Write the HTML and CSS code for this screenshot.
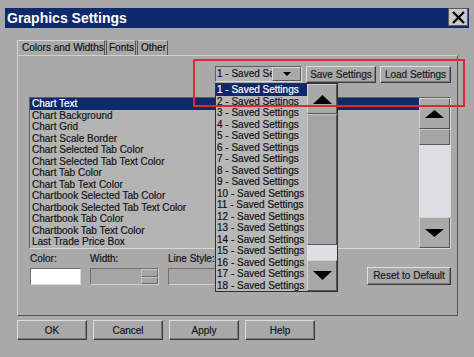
FILE: index.html
```html
<!DOCTYPE html>
<html>
<head>
<meta charset="utf-8">
<link rel="stylesheet" href="styles.css">
</head>
<body>
<div class="window">
  <div class="titlebar">
    <span class="title">Graphics Settings</span>
    <span class="close"><svg width="13" height="13" viewBox="0 0 13 13"><path d="M1 1 L12 12 M12 1 L1 12" stroke="#000" stroke-width="2.2"/></svg></span>
  </div>
  <div class="content">
    <div class="tabs">
      <div class="tab active">Colors and Widths</div>
      <div class="tab">Fonts</div>
      <div class="tab">Other</div>
    </div>
    <div class="panel">
      <div class="toprow">
        <div class="combo">
          <div class="combo-text">1 - Saved Se</div>
          <div class="combo-btn"><svg width="8" height="4" viewBox="0 0 8 4"><polygon points="0,0 8,0 4,4" fill="#000"/></svg></div>
          <div class="dropdown">
            <ul class="dd-items">
              <li class="sel">1 - Saved Settings</li>
              <li>2 - Saved Settings</li>
              <li>3 - Saved Settings</li>
              <li>4 - Saved Settings</li>
              <li>5 - Saved Settings</li>
              <li>6 - Saved Settings</li>
              <li>7 - Saved Settings</li>
              <li>8 - Saved Settings</li>
              <li>9 - Saved Settings</li>
              <li>10 - Saved Settings</li>
              <li>11 - Saved Settings</li>
              <li>12 - Saved Settings</li>
              <li>13 - Saved Settings</li>
              <li>14 - Saved Settings</li>
              <li>15 - Saved Settings</li>
              <li>16 - Saved Settings</li>
              <li>17 - Saved Settings</li>
              <li>18 - Saved Settings</li>
            </ul>
            <div class="scroll dd-scroll">
              <div class="sbtn"><svg width="19" height="9" viewBox="0 0 19 9"><polygon points="0,9 9.5,0 19,9" fill="#000"/></svg></div>
              <div class="thumb dd-thumb"></div>
              <div class="track dd-track"></div>
              <div class="sbtn down"><svg width="19" height="9" viewBox="0 0 19 9"><polygon points="0,0 19,0 9.5,9" fill="#000"/></svg></div>
            </div>
          </div>
        </div>
        <button class="btn save">Save Settings</button>
        <button class="btn load">Load Settings</button>
      </div>
      <div class="listbox">
        <ul class="items">
          <li class="sel">Chart Text</li>
          <li>Chart Background</li>
          <li>Chart Grid</li>
          <li>Chart Scale Border</li>
          <li>Chart Selected Tab Color</li>
          <li>Chart Selected Tab Text Color</li>
          <li>Chart Tab Color</li>
          <li>Chart Tab Text Color</li>
          <li>Chartbook Selected Tab Color</li>
          <li>Chartbook Selected Tab Text Color</li>
          <li>Chartbook Tab Color</li>
          <li>Chartbook Tab Text Color</li>
          <li>Last Trade Price Box</li>
        </ul>
        <div class="scroll list-scroll">
          <div class="sbtn big"><svg width="19" height="8" viewBox="0 0 19 8"><polygon points="0,8 9.5,0 19,8" fill="#000"/></svg></div>
          <div class="thumb list-thumb"></div>
          <div class="track list-track"></div>
          <div class="sbtn big down"><svg width="19" height="8" viewBox="0 0 19 8"><polygon points="0,0 19,0 9.5,8" fill="#000"/></svg></div>
        </div>
      </div>
      <div class="fields">
        <div class="field">
          <span class="label">Color:</span>
          <div class="swatch"></div>
        </div>
        <div class="field">
          <span class="label">Width:</span>
          <div class="spin">
            <div class="spin-input"></div>
            <div class="spin-btns"><span></span><span></span></div>
          </div>
        </div>
        <div class="field">
          <span class="label">Line Style:</span>
          <div class="linebox"></div>
        </div>
        <button class="btn reset">Reset to Default</button>
      </div>
    </div>
    <div class="actions">
      <button class="btn act">OK</button>
      <button class="btn act">Cancel</button>
      <button class="btn act">Apply</button>
      <button class="btn act">Help</button>
    </div>
  </div>
  <div class="highlight"></div>
</div>
</body>
</html>
```
FILE: styles.css
```css
* { box-sizing: border-box; }
html, body {
  margin: 0;
  padding: 0;
  background: #a9a9aa;
  font-family: "Liberation Sans", Arial, sans-serif;
  font-size: 10px;
  color: #141414;
}
.window {
  position: relative;
  width: 474px;
  height: 357px;
  padding: 8px 5px 0 5px;
  -webkit-text-stroke: 0.2px currentColor;
}
.titlebar {
  height: 20px;
  background: #0f2a6c;
  display: flex;
  align-items: flex-start;
  justify-content: space-between;
}
.title {
  color: #fff;
  font-weight: bold;
  font-size: 14px;
  line-height: 20px;
  padding-left: 2px;
  -webkit-text-stroke: 0;
}
.close {
  width: 20px;
  height: 18px;
  background: #c9c9cb;
  border: 1px solid #5a5a5a;
  display: flex;
  align-items: center;
  justify-content: center;
  margin-right: 1px;
}
.content {
  padding: 12px 11px 0 12px;
}
.tabs {
  display: flex;
  height: 15px;
}
.tab {
  height: 15px;
  line-height: 13px;
  white-space: nowrap;
  border-left: 1px solid #555;
  border-right: 1px solid #555;
  border-top: 1px solid #c8c8c8;
  margin-right: 1px;
}
.tab.active {
  width: 88px;
  padding-left: 4px;
  border-left: 1px solid #d5d5d5;
  border-top: 1px solid #d5d5d5;
}
.tab:nth-child(2) { width: 30px; padding-left: 2px; }
.tab:nth-child(3) { width: 31px; padding-left: 3px; }
.panel {
  width: 441px;
  height: 261px;
  border: 1px solid;
  border-color: #cfcfcf #505050 #505050 #cfcfcf;
  padding: 10px 0 0 0;
}
.toprow {
  display: flex;
  justify-content: flex-end;
  align-items: flex-start;
  gap: 4px;
  padding-right: 6px;
  height: 17px;
}
.combo {
  position: relative;
  width: 87px;
  height: 16px;
  display: flex;
  border: 1px solid;
  border-color: #5e5e5e #dadada #dadada #5e5e5e;
  background: #b4b4b4;
  z-index: 2;
}
.combo-text {
  width: 56px;
  overflow: hidden;
  white-space: nowrap;
  line-height: 14px;
  padding-left: 1px;
}
.combo-btn {
  flex: 1;
  border: 1px solid;
  border-color: #dadada #5a5a5a #5a5a5a #dadada;
  background: #a9a9aa;
  display: flex;
  align-items: center;
  justify-content: center;
}
.dropdown {
  position: absolute;
  left: -1px;
  top: 16px;
  width: 123px;
  height: 209px;
  border: 1px solid #303030;
  background: #b8b8b8;
  display: flex;
}
.dd-items, .items {
  list-style: none;
  margin: 0;
  padding: 0;
}
.dd-items {
  width: 91px;
}
.dd-items li {
  height: 11.5px;
  line-height: 11.5px;
  padding-left: 1px;
  white-space: nowrap;
}
.sel {
  background: #0f2a6c;
  color: #fff;
}
.scroll {
  display: flex;
  flex-direction: column;
}
.dd-scroll { width: 30px; }
.list-scroll { width: 31px; }
.sbtn {
  height: 30px;
  border: 1px solid;
  border-color: #d2d2d2 #555 #555 #d2d2d2;
  background: #a9a9aa;
  display: flex;
  align-items: center;
  justify-content: center;
}
.sbtn.big { height: 31px; }
.sbtn.down { height: 31px; }
.thumb {
  border: 1px solid;
  border-color: #c8c8c8 #5a5a5a #5a5a5a #c8c8c8;
  background: #a5a5a6;
}
.dd-thumb { height: 131px; }
.list-thumb { height: 16px; }
.track { background: #dedee4; }
.dd-track { height: 15px; }
.list-track { height: 72px; }
.btn {
  font-family: "Liberation Sans", Arial, sans-serif;
  font-size: 10px;
  color: #1a1a1a;
  -webkit-text-stroke: 0.2px #1a1a1a;
  background: #a9a9aa;
  border: 1px solid;
  border-color: #dedede #3c3c3c #3c3c3c #dedede;
  box-shadow: inset -1px -1px 0 #7a7a7a;
  padding: 0;
  margin: 0;
  height: 17px;
  line-height: 14px;
}
.save { width: 70px; }
.load { width: 71px; }
.listbox {
  margin: 14px 6px 0 11px;
  height: 152px;
  border: 1px solid;
  border-color: #606060 #d8d8d8 #d8d8d8 #606060;
  background: #b4b4b4;
  display: flex;
}
.items { flex: 1; }
.items li {
  height: 11.5px;
  line-height: 11.5px;
  padding-left: 2px;
  white-space: nowrap;
}
.fields {
  display: flex;
  align-items: flex-end;
  gap: 9px;
  padding: 0 6px 0 12px;
  margin-top: 4px;
}
.field {
  display: flex;
  flex-direction: column;
  gap: 3px;
}
.label {
  line-height: 12px;
  height: 12px;
  white-space: nowrap;
}
.swatch {
  width: 51px;
  height: 17px;
  background: #fff;
  border: 1px solid;
  border-color: #707070 #d8d8d8 #d8d8d8 #707070;
}
.spin {
  width: 69px;
  height: 17px;
  display: flex;
  border: 1px solid;
  border-color: #707070 #d0d0d0 #d0d0d0 #707070;
  background: #a6a6a7;
}
.spin-input { flex: 1; }
.spin-btns {
  width: 17px;
  display: flex;
  flex-direction: column;
}
.spin-btns span {
  flex: 1;
  border: 1px solid;
  border-color: #c8c8c8 #6a6a6a #6a6a6a #c8c8c8;
}
.linebox {
  width: 69px;
  height: 17px;
  border: 1px solid;
  border-color: #707070 #d0d0d0 #d0d0d0 #707070;
  background: #a6a6a7;
}
.reset {
  margin-left: auto;
  width: 84px;
  height: 18px;
}
.actions {
  display: flex;
  gap: 6px;
  margin-top: 4px;
}
.act {
  width: 70px;
  height: 20px;
  line-height: 17px;
}
.highlight {
  position: absolute;
  left: 193px;
  top: 59px;
  width: 272px;
  height: 48px;
  border: 2px solid #dc2a2e;
  z-index: 5;
  pointer-events: none;
}
```
